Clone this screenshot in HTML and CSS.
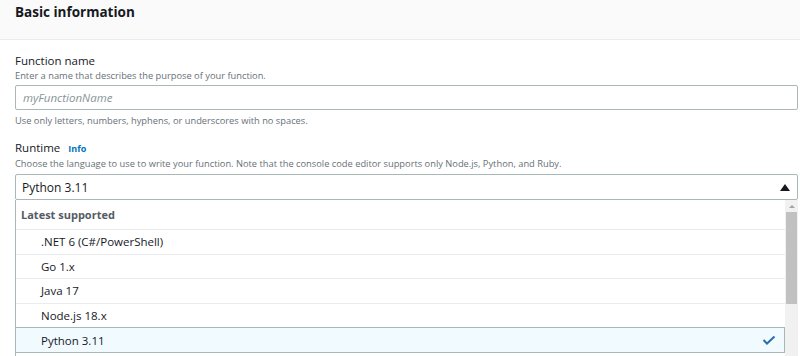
FILE: index.html
```html
<!DOCTYPE html>
<html lang="en">
<head>
    <meta charset="UTF-8">
    <meta name="viewport" content="width=device-width, initial-scale=1.0">
    <title>Basic information</title>
    <link rel="stylesheet" href="styles.css">
</head>
<body>
    <div class="panel">
        <div class="panel-header">
            <h2>Basic information</h2>
        </div>

        <div class="panel-body">
            <div class="form-group">
                <label for="functionName">Function name</label>
                <div class="description">Enter a name that describes the purpose of your function.</div>
                <input type="text" id="functionName" placeholder="myFunctionName">
                <div class="constraint">Use only letters, numbers, hyphens, or underscores with no spaces.</div>
            </div>

            <div class="form-group runtime">
                <label>Runtime <span class="info">Info</span></label>
                <div class="description">Choose the language to use to write your function. Note that the console code editor supports only Node.js, Python, and Ruby.</div>
                <div class="select">
                    <span>Python 3.11</span>
                    <span class="caret"></span>
                </div>
                <div class="dropdown">
                    <ul class="options">
                        <li class="group">Latest supported</li>
                        <li>.NET 6 (C#/PowerShell)</li>
                        <li>Go 1.x</li>
                        <li>Java 17</li>
                        <li>Node.js 18.x</li>
                        <li class="selected">Python 3.11
                            <svg class="check" width="14" height="10" viewBox="0 0 14 10">
                                <path d="M1.5 5 L5 8.5 L12.5 1.5" fill="none" stroke="#2b6fa8" stroke-width="2"/>
                            </svg>
                        </li>
                    </ul>
                    <div class="scrollbar">
                        <span class="arrow"></span>
                        <div class="thumb"></div>
                    </div>
                </div>
            </div>
        </div>
    </div>
</body>
</html>
```

FILE: styles.css
```css
body {
    margin: 0;
    font-family: "Open Sans", "Noto Sans", sans-serif;
    color: #16191f;
    background-color: white;
    overflow: hidden;
}

.panel-header {
    background-color: #fafafa;
    border-bottom: 1px solid #eaeded;
    height: 39px;
    padding: 0 15px;
}

.panel-header h2 {
    margin: 0;
    padding-top: 0;
    font-size: 13.5px;
    font-weight: bold;
    line-height: 24px;
}

.panel-body {
    padding: 13px 2px 0 15px;
}

.form-group {
    margin-bottom: 12px;
}

label {
    display: block;
    font-size: 11.5px;
    line-height: 16px;
}

.info {
    margin-left: 5px;
    font-size: 9px;
    font-weight: bold;
    color: #0073bb;
}

.description,
.constraint {
    font-size: 9.3px;
    line-height: 14px;
    color: #687078;
}

.description {
    margin-bottom: 2px;
}

.constraint {
    margin-top: 4px;
}

.runtime .description {
    margin-bottom: 3px;
}

input[type="text"] {
    display: block;
    box-sizing: border-box;
    width: 100%;
    height: 25px;
    margin: 0;
    padding: 0 7px;
    border: 1px solid #aab7b8;
    border-radius: 2px;
    font-family: inherit;
    font-size: 11.5px;
    color: #16191f;
}

input::placeholder {
    font-style: italic;
    color: #879596;
}

.select {
    box-sizing: border-box;
    height: 26px;
    padding: 0 7px 0 6px;
    border: 1px solid #aab7b8;
    border-radius: 2px;
    display: flex;
    align-items: center;
    justify-content: space-between;
    font-size: 12px;
}

.caret {
    width: 0;
    height: 0;
    border-left: 5px solid transparent;
    border-right: 5px solid transparent;
    border-bottom: 7px solid #16191f;
}

.dropdown {
    display: flex;
    height: 157px;
    border-left: 1px solid #aab7b8;
}

.options {
    flex: 1;
    margin: 0;
    padding: 0;
    list-style: none;
}

.options li {
    box-sizing: border-box;
    height: 24.5px;
    padding-left: 25px;
    border-bottom: 1px solid #eaeded;
    display: flex;
    align-items: center;
    font-size: 11.5px;
    color: #16191f;
}

.options li.group {
    height: 30px;
    padding-left: 5px;
    font-size: 11px;
    font-weight: bold;
    color: #545b64;
}

.options li.selected {
    height: 26px;
    margin-top: -1px;
    margin-left: -1px;
    padding-left: 25px;
    justify-content: space-between;
    padding-right: 8px;
    background-color: #f1faff;
    border: 1px solid #aab7b8;
}

.scrollbar {
    width: 13px;
    background-color: #f1f1f1;
    display: flex;
    flex-direction: column;
    align-items: center;
}

.arrow {
    margin: 5px 0 4px;
    width: 0;
    height: 0;
    border-left: 3px solid transparent;
    border-right: 3px solid transparent;
    border-bottom: 3px solid #a3a3a3;
}

.thumb {
    width: 11px;
    height: 92px;
    background-color: #c1c1c1;
}
```
